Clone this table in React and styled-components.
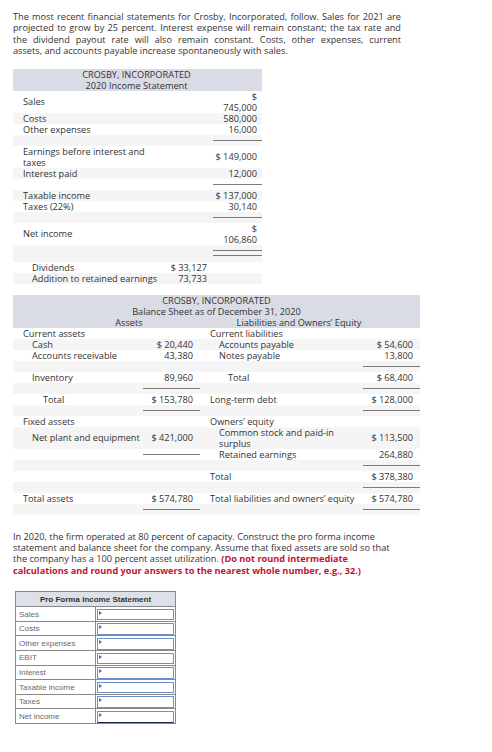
import React from 'react';
import styled, { createGlobalStyle } from 'styled-components';

const GlobalStyle = createGlobalStyle`
  body {
    margin: 0;
    background: #fff;
  }
`;

const Page = styled.div`
  padding: 11px 0 20px 13px;
  font-family: 'Open Sans', 'Liberation Sans', sans-serif;
  font-size: 9.2px;
  color: #333;
`;

const Intro = styled.p`
  margin: 0;
  width: 388px;
  line-height: 11.4px;
`;

// the source paragraph is justified line by line
const IntroLine = styled.span`
  display: block;
  white-space: nowrap;
  text-align: justify;
  text-align-last: ${(p) => (p.$last ? 'left' : 'justify')};
`;

const Note = styled.p`
  margin: 16px 0 0;
  line-height: 11.4px;
  white-space: nowrap;
`;

const Warn = styled.strong`
  color: #c4122f;
  font-weight: 700;
`;

const Sheet = styled.table`
  border-collapse: collapse;
  table-layout: fixed;
  width: ${(p) => p.$width}px;
  margin-top: ${(p) => p.$top}px;
  line-height: 11px;
`;

const Head = styled.th`
  background: #d9dce5;
  font-weight: normal;
  text-align: center;
  padding: 0 ${(p) => p.$padRight || 0}px 0 ${(p) => p.$padLeft || 0}px;
  height: 11px;
  line-height: 11px;
  white-space: nowrap;
`;

const Row = styled.tr`
  background: ${(p) => (p.$shade ? '#f5f5f5' : '#fff')};
`;

const Label = styled.td`
  padding: 0 0 0 ${(p) => 10 + (p.$indent || 0)}px;
  height: 11px;
  white-space: nowrap;
  vertical-align: middle;
`;

const Amount = styled.td`
  padding: 0 ${(p) => p.$pad || 6}px 0 0;
  text-align: right;
  white-space: nowrap;
  vertical-align: middle;
`;

const RuleCell = styled.td`
  padding: 0;
  height: ${(p) => p.$h || 11}px;
  vertical-align: middle;
`;

const Line = styled.div`
  height: 0;
  border-top: 1px solid #7a7a7a;
`;

const DoubleLine = styled.div`
  height: 4px;
  border-top: 1px solid #7a7a7a;
  border-bottom: 1px solid #7a7a7a;
`;

const Rule = ({ double, h }) => (
  <RuleCell $h={h}>{double ? <DoubleLine /> : <Line />}</RuleCell>
);

const Blank = styled.td`
  padding: 0;
  height: ${(p) => p.$h || 11}px;
`;

/* pro forma answer table */

const Forma = styled.table`
  border-collapse: collapse;
  table-layout: fixed;
  width: 161px;
  margin: 15px 0 0 2px;
  font-family: 'Liberation Sans', Arial, sans-serif;
  font-size: 8px;
  border: 1px solid #8a8a8a;
`;

const FormaHead = styled.th`
  background: #dde0e8;
  color: #333;
  font-weight: 700;
  height: 14px;
  padding: 0;
  border: 1px solid #8a8a8a;
  text-align: center;
`;

const FormaLabel = styled.td`
  width: 82px;
  height: 13.6px;
  padding: 0 0 0 3px;
  color: #6a6a6a;
  border: 1px solid #8a8a8a;
  white-space: nowrap;
`;

const FormaCell = styled.td`
  padding: 1px 1px 0;
  border: 1px solid #8a8a8a;
`;

const Entry = styled.div`
  position: relative;
  height: 9.6px;
  border: 1px solid #6b8fc6;
  border-bottom-color: ${(p) => (p.$last ? '#1d2a44' : '#6b8fc6')};
  background: #fff;

  &::before {
    content: '';
    position: absolute;
    left: 1px;
    top: 1px;
    border-style: solid;
    border-width: 2px 0 2px 3px;
    border-color: transparent transparent transparent #3d6fbf;
  }
`;

const formaRows = [
  'Sales',
  'Costs',
  'Other expenses',
  'EBIT',
  'Interest',
  'Taxable income',
  'Taxes',
  'Net income',
];

const introLines = [
  'The most recent financial statements for Crosby, Incorporated, follow. Sales for 2021 are',
  'projected to grow by 25 percent. Interest expense will remain constant; the tax rate and',
  'the dividend payout rate will also remain constant. Costs, other expenses, current',
  'assets, and accounts payable increase spontaneously with sales.',
];

export default function App() {
  return (
    <Page>
      <GlobalStyle />
      <Intro>
        {introLines.map((text, i) => (
          <IntroLine key={i} $last={i === introLines.length - 1}>
            {text}
          </IntroLine>
        ))}
      </Intro>

      <Sheet $width={249} $top={12}>
        <colgroup>
          <col style={{ width: 147 }} />
          <col style={{ width: 53 }} />
          <col style={{ width: 49 }} />
        </colgroup>
        <thead>
          <tr>
            <Head colSpan={3} $padRight={2}>
              CROSBY, INCORPORATED
            </Head>
          </tr>
          <tr>
            <Head colSpan={3} $padRight={2}>
              2020 Income Statement
            </Head>
          </tr>
        </thead>
        <tbody>
          <Row>
            <Label>Sales</Label>
            <Blank />
            <Amount $pad={5}>
              $<br />
              745,000
            </Amount>
          </Row>
          <Row $shade>
            <Label>Costs</Label>
            <Blank />
            <Amount $pad={5}>580,000</Amount>
          </Row>
          <Row>
            <Label>Other expenses</Label>
            <Blank />
            <Amount $pad={5}>16,000</Amount>
          </Row>
          <Row $shade>
            <Blank />
            <Blank />
            <Rule />
          </Row>
          <Row>
            <Label>
              Earnings before interest and
              <br />
              taxes
            </Label>
            <Blank />
            <Amount $pad={5}>$ 149,000</Amount>
          </Row>
          <Row $shade>
            <Label>Interest paid</Label>
            <Blank />
            <Amount $pad={5}>12,000</Amount>
          </Row>
          <Row>
            <Blank />
            <Blank />
            <Rule />
          </Row>
          <Row $shade>
            <Label>Taxable income</Label>
            <Blank />
            <Amount $pad={5}>$ 137,000</Amount>
          </Row>
          <Row>
            <Label>Taxes (22%)</Label>
            <Blank />
            <Amount $pad={5}>30,140</Amount>
          </Row>
          <Row $shade>
            <Blank />
            <Blank />
            <Rule />
          </Row>
          <Row>
            <Label>Net income</Label>
            <Blank />
            <Amount $pad={5}>
              $<br />
              106,860
            </Amount>
          </Row>
          <Row $shade>
            <Blank $h={17} />
            <Blank $h={17} />
            <Rule double h={17} />
          </Row>
          <Row>
            <Label $indent={9}>Dividends</Label>
            <Amount>$ 33,127</Amount>
            <Blank />
          </Row>
          <Row $shade>
            <Label $indent={9}>Addition to retained earnings</Label>
            <Amount>73,733</Amount>
            <Blank />
          </Row>
        </tbody>
      </Sheet>

      <Sheet $width={407} $top={11}>
        <colgroup>
          <col style={{ width: 130 }} />
          <col style={{ width: 57 }} />
          <col style={{ width: 163 }} />
          <col style={{ width: 57 }} />
        </colgroup>
        <thead>
          <tr>
            <Head colSpan={4}>CROSBY, INCORPORATED</Head>
          </tr>
          <tr>
            <Head colSpan={4}>Balance Sheet as of December 31, 2020</Head>
          </tr>
          <tr>
            <Head colSpan={2} $padLeft={45}>
              Assets
            </Head>
            <Head colSpan={2} $padRight={22}>
              Liabilities and Owners’ Equity
            </Head>
          </tr>
        </thead>
        <tbody>
          <Row>
            <Label>Current assets</Label>
            <Blank />
            <Label>Current liabilities</Label>
            <Blank />
          </Row>
          <Row $shade>
            <Label $indent={9}>Cash</Label>
            <Amount $pad={7}>$ 20,440</Amount>
            <Label $indent={9}>Accounts payable</Label>
            <Amount $pad={7}>$ 54,600</Amount>
          </Row>
          <Row>
            <Label $indent={9}>Accounts receivable</Label>
            <Amount $pad={7}>43,380</Amount>
            <Label $indent={9}>Notes payable</Label>
            <Amount $pad={7}>13,800</Amount>
          </Row>
          <Row $shade>
            <Blank />
            <Blank />
            <Blank />
            <Rule />
          </Row>
          <Row>
            <Label $indent={9}>Inventory</Label>
            <Amount $pad={7}>89,960</Amount>
            <Label $indent={18}>Total</Label>
            <Amount $pad={7}>$ 68,400</Amount>
          </Row>
          <Row $shade>
            <Blank />
            <Rule />
            <Blank />
            <Rule />
          </Row>
          <Row>
            <Label $indent={20}>Total</Label>
            <Amount $pad={7}>$ 153,780</Amount>
            <Label>Long-term debt</Label>
            <Amount $pad={7}>$ 128,000</Amount>
          </Row>
          <Row $shade>
            <Blank />
            <Rule />
            <Blank />
            <Rule />
          </Row>
          <Row>
            <Label>Fixed assets</Label>
            <Blank />
            <Label>Owners’ equity</Label>
            <Blank />
          </Row>
          <Row $shade>
            <Label $indent={9}>Net plant and equipment</Label>
            <Amount $pad={7}>$ 421,000</Amount>
            <Label $indent={9}>
              Common stock and paid-in
              <br />
              surplus
            </Label>
            <Amount $pad={7}>$ 113,500</Amount>
          </Row>
          <Row>
            <Blank />
            <Rule />
            <Label $indent={9}>Retained earnings</Label>
            <Amount $pad={7}>264,880</Amount>
          </Row>
          <Row $shade>
            <Blank />
            <Blank />
            <Blank />
            <Rule />
          </Row>
          <Row>
            <Blank />
            <Blank />
            <Label>Total</Label>
            <Amount $pad={7}>$ 378,380</Amount>
          </Row>
          <Row $shade>
            <Blank />
            <Blank />
            <Blank />
            <Rule />
          </Row>
          <Row>
            <Label>Total assets</Label>
            <Amount $pad={7}>$ 574,780</Amount>
            <Label>Total liabilities and owners’ equity</Label>
            <Amount $pad={7}>$ 574,780</Amount>
          </Row>
          <Row $shade>
            <Blank />
            <Rule />
            <Blank />
            <Rule />
          </Row>
        </tbody>
      </Sheet>

      <Note>
        In 2020, the firm operated at 80 percent of capacity. Construct the pro
        forma income
        <br />
        statement and balance sheet for the company. Assume that fixed assets
        are sold so that
        <br />
        the company has a 100 percent asset utilization.{' '}
        <Warn>
          (Do not round intermediate
          <br />
          calculations and round your answers to the nearest whole number, e.g.,
          32.)
        </Warn>
      </Note>

      <Forma>
        <thead>
          <tr>
            <FormaHead colSpan={2}>Pro Forma Income Statement</FormaHead>
          </tr>
        </thead>
        <tbody>
          {formaRows.map((name, i) => (
            <tr key={name}>
              <FormaLabel>{name}</FormaLabel>
              <FormaCell>
                <Entry $last={i === formaRows.length - 1} />
              </FormaCell>
            </tr>
          ))}
        </tbody>
      </Forma>
    </Page>
  );
}
